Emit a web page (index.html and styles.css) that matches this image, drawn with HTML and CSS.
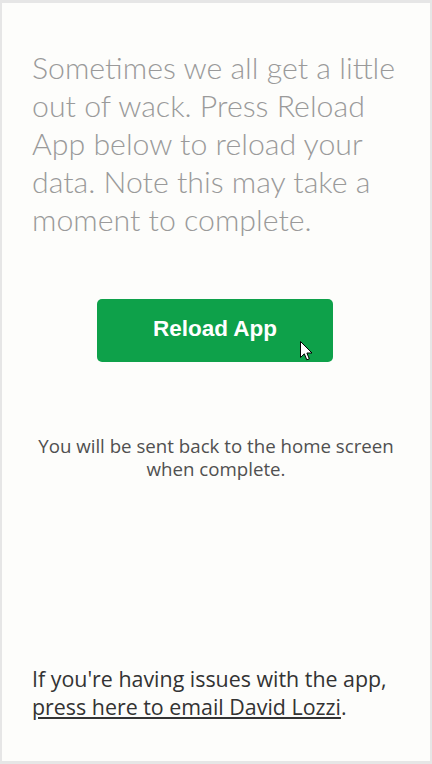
FILE: index.html
```html
<!DOCTYPE html>
<html>
<head>
<meta charset="utf-8">
<link rel="stylesheet" href="styles.css">
</head>
<body>
<div class="panel">
  <p class="intro">Sometimes we all get a little out of wack. Press Reload App below to reload your data. Note this may take a moment to complete.</p>
  <div class="btn-wrap">
    <button class="reload">Reload App</button>
    <svg class="cursor" width="13" height="21" viewBox="0 0 13 21"><path d="M0.5 0.5 L0.5 16.5 L4.3 12.8 L6.8 18.8 L9.3 17.8 L6.9 12 L12 12 Z" fill="#fff" stroke="#000" stroke-width="1" stroke-linejoin="miter"/></svg>
  </div>
  <p class="note">You will be sent back to the home screen when complete.</p>
  <p class="footer">If you're having issues with the app, <a class="mail" href="#">press here to email David Lozzi</a>.</p>
</div>
</body>
</html>
```

FILE: styles.css
```css
html, body {
  margin: 0;
  padding: 0;
}
body {
  background: #e6e6e6;
  padding: 3px 2px 3px 2px;
  box-sizing: border-box;
  width: 432px;
  height: 764px;
}
.panel {
  background: #fdfdfb;
  width: 428px;
  height: 758px;
  box-sizing: border-box;
  padding: 45px 30px 40px 30px;
  display: flex;
  flex-direction: column;
}
.intro {
  margin: 0;
  font-family: Lato, "Open Sans", sans-serif;
  font-weight: 300;
  font-size: 30.3px;
  line-height: 38px;
  color: #9a9a9a;
}
.btn-wrap {
  position: relative;
  display: flex;
  justify-content: center;
  margin-top: 61px;
}
.reload {
  width: 236px;
  height: 63px;
  margin-left: -2px;
  border: none;
  border-radius: 5px;
  background: #0ea14a;
  color: #fff;
  font-family: "Liberation Sans", Arial, sans-serif;
  font-weight: bold;
  font-size: 22.5px;
  padding: 0 0 3px 0;
}
.cursor {
  position: absolute;
  left: 268px;
  top: 42px;
}
.note {
  margin: 72px 0 0 0;
  text-align: center;
  font-family: "Open Sans", sans-serif;
  font-size: 18.7px;
  line-height: 23px;
  color: #505050;
}
.footer {
  margin: auto 0 0 0;
  font-family: "Open Sans", sans-serif;
  font-size: 21.4px;
  line-height: 28px;
  color: #333;
}
.mail {
  color: #333;
  text-decoration: underline;
}
```
